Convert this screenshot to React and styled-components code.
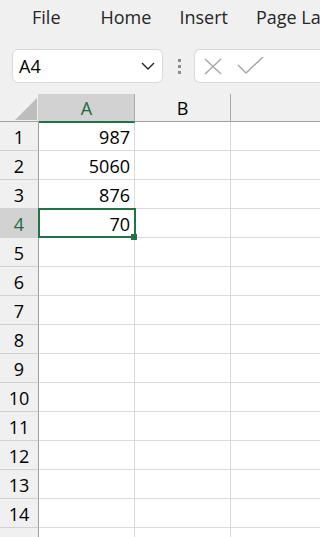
import React from "react";
import styled, { createGlobalStyle } from "styled-components";

const Global = createGlobalStyle`
  html, body { margin: 0; padding: 0; overflow: hidden; }
  body {
    background: #f0f0f0;
    font-family: "Open Sans", "Noto Sans", sans-serif;
  }
  * { box-sizing: border-box; }
`;

const Page = styled.div`
  display: flex;
  flex-direction: column;
  width: 100vw;
  min-width: 261px;
  height: 100vh;
  min-height: 537px;
  overflow: hidden;
`;

const MenuBar = styled.nav`
  display: flex;
  align-items: center;
  flex-shrink: 0;
  height: 33px;
  padding-left: 32px;
  gap: 28px;
  white-space: nowrap;
  overflow: hidden;
`;

const Tab = styled.span`
  font-size: 18px;
  color: #262626;
  margin-right: ${(p) => p.$extra || 0}px;
`;

const Toolbar = styled.div`
  display: flex;
  align-items: center;
  flex-shrink: 0;
  height: 61px;
  padding: 16px 0 11px 12px;
  white-space: nowrap;
  overflow: hidden;
`;

const NameBox = styled.div`
  display: flex;
  align-items: center;
  justify-content: space-between;
  width: 151px;
  height: 34px;
  flex-shrink: 0;
  background: #ffffff;
  border: 1px solid #d9d9d9;
  border-radius: 6px;
  padding: 0 7px 0 6px;
  font-size: 18px;
  color: #000;
`;

const Grip = styled.div`
  display: flex;
  flex-direction: column;
  gap: 3px;
  margin: 0 13px 0 15px;
  flex-shrink: 0;
`;

const Dot = styled.span`
  width: 3px;
  height: 3px;
  background: #8c8c8c;
`;

const FormulaBox = styled.div`
  display: flex;
  align-items: center;
  gap: 15px;
  flex: 1;
  min-width: 80px;
  height: 34px;
  background: #ffffff;
  border: 1px solid #d9d9d9;
  border-right: none;
  border-radius: 6px 0 0 6px;
  padding-left: 9px;
  overflow: hidden;
`;

const Sheet = styled.div`
  display: grid;
  grid-template-columns: 39px 96px 96px 1fr;
  grid-template-rows: 28px;
  grid-auto-rows: 29px;
  background: #ffffff;
  flex: 1;
  min-height: 0;
  overflow: hidden;
`;

const Corner = styled.div`
  position: relative;
  background: #f0f0f0;
  border-right: 1px solid #d0d0d0;
  border-bottom: 1px solid #9e9e9e;
`;

const ColHead = styled.div`
  display: flex;
  align-items: center;
  justify-content: center;
  font-size: 18px;
  background: ${(p) => (p.$active ? "#d2d2d2" : "#f0f0f0")};
  color: ${(p) => (p.$active ? "#1e6b41" : "#000")};
  border-right: 1px solid #a8a8a8;
  border-bottom: ${(p) => (p.$active ? "2px solid #217346" : "1px solid #9e9e9e")};
  ${(p) => (p.$active ? "margin-bottom: -1px; position: relative; z-index: 1;" : "")}
  ${(p) => (p.$last ? "border-right: none;" : "")}
`;

const RowHead = styled.div`
  display: flex;
  align-items: center;
  justify-content: center;
  font-size: 18px;
  padding-top: 1px;
  background: ${(p) => (p.$active ? "#d2d2d2" : "#f0f0f0")};
  color: ${(p) => (p.$active ? "#1e6b41" : "#000")};
  border-right: 1px solid #9e9e9e;
  border-bottom: 1px solid #d0d0d0;
`;

const Cell = styled.div`
  position: relative;
  display: flex;
  align-items: center;
  justify-content: flex-end;
  padding: 1px 4px 0 0;
  font-size: 18px;
  color: #000;
  border-right: 1px solid #dadada;
  border-bottom: 1px solid #dadada;
  ${(p) => (p.$last ? "border-right: none;" : "")}
`;

const Selection = styled.div`
  position: absolute;
  left: -1px;
  top: -1px;
  right: -2px;
  bottom: -1px;
  border: 2px solid #217346;
  pointer-events: none;
  z-index: 2;
`;

const Handle = styled.span`
  position: absolute;
  right: -3px;
  bottom: -4px;
  width: 6px;
  height: 6px;
  background: #217346;
`;

const TriangleSvg = styled.svg`
  position: absolute;
  left: 15px;
  top: 4px;
`;

const values = ["987", "5060", "876", "70"];

export default function App() {
  const rows = Array.from({ length: 15 }, (_, i) => i + 1);
  return (
    <Page>
      <Global />
      <MenuBar>
        <Tab $extra={12}>File</Tab>
        <Tab>Home</Tab>
        <Tab>Insert</Tab>
        <Tab>Page Layout</Tab>
      </MenuBar>
      <Toolbar>
        <NameBox>
          <span>A4</span>
          <svg width="14" height="8" viewBox="0 0 14 8">
            <path d="M1 1 L7 7 L13 1" fill="none" stroke="#262626" strokeWidth="1.4" />
          </svg>
        </NameBox>
        <Grip>
          <Dot />
          <Dot />
          <Dot />
        </Grip>
        <FormulaBox>
          <svg width="18" height="17" viewBox="0 0 18 17">
            <path d="M1 1 L17 16 M17 1 L1 16" fill="none" stroke="#a6a6a6" strokeWidth="1.4" />
          </svg>
          <svg width="30" height="18" viewBox="0 0 30 18">
            <path d="M1 8 L9 16 L27 -1" fill="none" stroke="#a6a6a6" strokeWidth="1.4" />
          </svg>
        </FormulaBox>
      </Toolbar>
      <Sheet>
        <Corner>
          <TriangleSvg width="22" height="22" viewBox="0 0 22 22">
            <polygon points="0,22 22,22 22,0" fill="#bdbdbd" />
          </TriangleSvg>
        </Corner>
        <ColHead $active>A</ColHead>
        <ColHead>B</ColHead>
        <ColHead $last />
        {rows.map((r) => (
          <React.Fragment key={r}>
            <RowHead $active={r === 4}>{r}</RowHead>
            <Cell>
              {values[r - 1] || ""}
              {r === 4 && (
                <Selection>
                  <Handle />
                </Selection>
              )}
            </Cell>
            <Cell />
            <Cell $last />
          </React.Fragment>
        ))}
      </Sheet>
    </Page>
  );
}
